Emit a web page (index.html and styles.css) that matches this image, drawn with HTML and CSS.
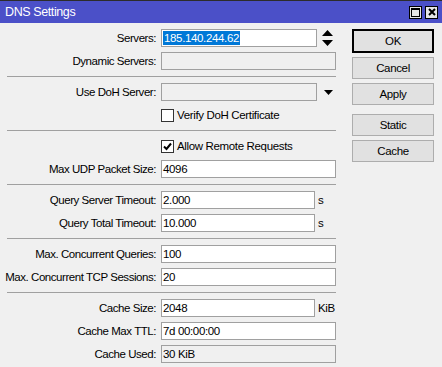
FILE: index.html
```html
<!DOCTYPE html>
<html lang="en">
<head>
    <meta charset="UTF-8">
    <meta name="viewport" content="width=device-width, initial-scale=1.0">
    <title>DNS Settings</title>
    <link rel="stylesheet" href="styles.css">
</head>
<body>
    <div class="window">
        <!-- 标题栏 -->
        <div class="titlebar">
            <span class="title">DNS Settings</span>
            <div class="winbtns">
                <div class="winbtn max"><span></span></div>
                <div class="winbtn close">
                    <svg width="8" height="8" viewBox="0 0 8 8"><path d="M1 1L7 7M7 1L1 7" stroke="#000" stroke-width="2"/></svg>
                </div>
            </div>
        </div>

        <div class="content">
            <!-- 表单区域 -->
            <div class="form">
                <div class="row">
                    <label>Servers:</label>
                    <div class="cell">
                        <div class="field mid"><span class="sel">185.140.244.62</span></div>
                        <svg class="updown" width="11" height="16" viewBox="0 0 11 16"><path d="M5.5 0L11 6H0Z M0 10H11L5.5 16Z" fill="#000"/></svg>
                    </div>
                </div>
                <div class="row">
                    <label>Dynamic Servers:</label>
                    <div class="cell"><div class="field off"></div></div>
                </div>
                <div class="sep"></div>
                <div class="row">
                    <label>Use DoH Server:</label>
                    <div class="cell">
                        <div class="field mid off"></div>
                        <svg class="drop" width="9" height="5" viewBox="0 0 9 5"><path d="M0 0H9L4.5 5Z" fill="#000"/></svg>
                    </div>
                </div>
                <div class="row">
                    <label></label>
                    <div class="cell"><span class="check"></span>Verify DoH Certificate</div>
                </div>
                <div class="sep"></div>
                <div class="row">
                    <label></label>
                    <div class="cell">
                        <span class="check">
                            <svg width="9" height="9" viewBox="0 0 9 9"><path d="M1 4.5L3.5 7L8 1.5" stroke="#000" stroke-width="2" fill="none"/></svg>
                        </span>Allow Remote Requests
                    </div>
                </div>
                <div class="row">
                    <label>Max UDP Packet Size:</label>
                    <div class="cell"><div class="field">4096</div></div>
                </div>
                <div class="sep"></div>
                <div class="row">
                    <label>Query Server Timeout:</label>
                    <div class="cell"><div class="field short">2.000</div><span class="unit">s</span></div>
                </div>
                <div class="row">
                    <label>Query Total Timeout:</label>
                    <div class="cell"><div class="field short">10.000</div><span class="unit">s</span></div>
                </div>
                <div class="sep"></div>
                <div class="row">
                    <label>Max. Concurrent Queries:</label>
                    <div class="cell"><div class="field">100</div></div>
                </div>
                <div class="row">
                    <label>Max. Concurrent TCP Sessions:</label>
                    <div class="cell"><div class="field">20</div></div>
                </div>
                <div class="sep"></div>
                <div class="row">
                    <label>Cache Size:</label>
                    <div class="cell"><div class="field short">2048</div><span class="unit">KiB</span></div>
                </div>
                <div class="row">
                    <label>Cache Max TTL:</label>
                    <div class="cell"><div class="field">7d 00:00:00</div></div>
                </div>
                <div class="row">
                    <label>Cache Used:</label>
                    <div class="cell"><div class="field off">30 KiB</div></div>
                </div>
            </div>

            <!-- 按钮区域 -->
            <div class="buttons">
                <div class="btn default">OK</div>
                <div class="btn">Cancel</div>
                <div class="btn">Apply</div>
                <div class="btn gap">Static</div>
                <div class="btn">Cache</div>
            </div>
        </div>
    </div>
</body>
</html>
```

FILE: styles.css
```css
*{
    margin: 0;
    padding: 0;
    box-sizing: border-box;
}
body{
    background: #f0f0f0;
    font-family: "Liberation Sans", Arial, sans-serif;
    font-size: 11.5px;
    letter-spacing: -0.35px;
    color: #000;
}
.titlebar{
    height: 23px;
    background: #4b50c8;
    border-top: 1px solid #2c2c2c;
    display: flex;
    align-items: center;
    justify-content: space-between;
    padding: 0 4px 0 5px;
}
.title{
    color: white;
    font-size: 12.5px;
    letter-spacing: -0.4px;
}
.winbtns{
    display: flex;
    gap: 3px;
}
.winbtn{
    width: 13px;
    height: 13px;
    background: #e6e6e6;
    border: 1px solid #000;
    display: flex;
    justify-content: center;
    align-items: center;
}
.winbtn.max span{
    width: 9px;
    height: 9px;
    border: 1px solid #000;
    border-top-width: 2px;
}
.content{
    display: flex;
    padding-top: 6px;
}
.form{
    width: 336px;
    display: flex;
    flex-direction: column;
}
.row{
    height: 18px;
    display: flex;
    align-items: center;
    margin-top: 5px;
}
.row:first-child, .sep + .row{
    margin-top: 0;
}
.row label{
    width: 156px;
    text-align: right;
    white-space: nowrap;
    letter-spacing: -0.45px;
}
.cell{
    margin-left: 5px;
    flex: 1;
    display: flex;
    align-items: center;
    height: 18px;
}
.field{
    width: 175px;
    height: 18px;
    background: white;
    border: 1px solid #a0a0a0;
    padding: 0 1px;
    display: flex;
    align-items: center;
    white-space: nowrap;
}
.field.off{
    background: #f0f0f0;
}
.field.mid{
    width: 156px;
}
.field.short{
    width: 154px;
}
.sel{
    background: #0078d7;
    color: white;
    padding: 0 1px;
    line-height: 14px;
}
.updown{
    margin-left: 5px;
}
.drop{
    margin-left: 7px;
}
.unit{
    margin-left: 3px;
}
.check{
    width: 13px;
    height: 13px;
    background: white;
    border: 1px solid #333;
    margin-right: 3px;
    display: flex;
    justify-content: center;
    align-items: center;
}
.sep{
    height: 1px;
    background: #a0a0a0;
    margin: 6px 0 6px 7px;
}
.buttons{
    margin-left: 16px;
    width: 82px;
    display: flex;
    flex-direction: column;
    gap: 4px;
}
.btn{
    height: 22px;
    background: #e1e1e1;
    border: 1px solid #adadad;
    display: flex;
    justify-content: center;
    align-items: center;
}
.btn.default{
    border: 2px solid #000;
    height: 24px;
}
.btn.gap{
    margin-top: 5px;
}
```
